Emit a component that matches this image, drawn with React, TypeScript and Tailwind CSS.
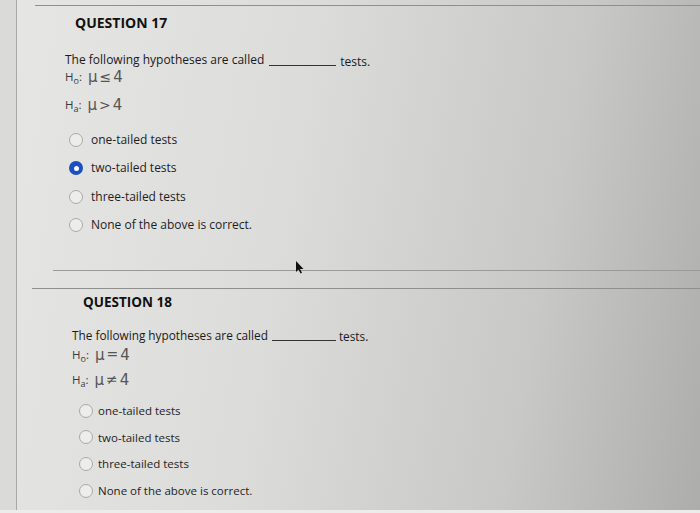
import React from "react";

type Option = { label: string; checked?: boolean };

function Radio({ checked }: { checked?: boolean }) {
  if (checked) {
    return (
      <span className="flex h-[14px] w-[14px] shrink-0 items-center justify-center rounded-full bg-[#1b4fc2]">
        <span className="h-[5px] w-[5px] rounded-full bg-white" />
      </span>
    );
  }
  return (
    <span className="h-[14px] w-[14px] shrink-0 rounded-full border border-[#a9a9a7] bg-[#ededeb]" />
  );
}

function Hypothesis({ sub, rel }: { sub: string; rel: string }) {
  return (
    <div className="flex h-[20px] items-center">
      <span className="text-[11.5px] text-[#3a3a3a]">
        H<sub className="text-[9px]">{sub}</sub>:
      </span>
      <span className="ml-[6px] font-['DejaVu_Sans',sans-serif] text-[15px] text-[#555]">μ</span>
      <span className="ml-[2px] font-['DejaVu_Sans',sans-serif] text-[14px] text-[#555]">{rel}</span>
      <span className="ml-[2px] font-['DejaVu_Sans',sans-serif] text-[15px] text-[#555]">4</span>
    </div>
  );
}

function Options({ options, gap, size, inner }: { options: Option[]; gap: string; size: string; inner: string }) {
  return (
    <div className={`flex flex-col ${gap}`}>
      {options.map((o) => (
        <div key={o.label} className={`flex h-[20px] items-center text-[#1e1e1e] ${size} ${inner}`}>
          <Radio checked={o.checked} />
          <span>{o.label}</span>
        </div>
      ))}
    </div>
  );
}

const labels = ["one-tailed tests", "two-tailed tests", "three-tailed tests", "None of the above is correct."];

export default function App() {
  return (
    <div className="relative flex h-[513px] w-[700px] overflow-hidden border-b-[3px] border-[#ececea] bg-[linear-gradient(100deg,#e6e6e4_0%,#dcdcda_40%,#c8c8c6_75%,#adadab_100%)] font-['Open_Sans',sans-serif] text-[#1a1a1a]">
      {/* left rail */}
      <div className="w-[17px] shrink-0 border-r border-[#a8a8a6] bg-[#dadad8]" />

      <div className="flex flex-1 flex-col">
        {/* Question 17 */}
        <section className="ml-[18px] mt-[5px] border-t border-[#8f8f8d]">
          <h2 className="mt-[7px] h-[20px] pl-[40px] text-[14px] font-bold leading-[20px] text-[#111]">
            QUESTION 17
          </h2>
          <div className="mt-[17px] pl-[30px]">
            <div className="flex h-[20px] items-center text-[12px]">
              <span>The following hypotheses are called</span>
              <span className="ml-[5px] mt-[10px] w-[67px] border-b border-[#333]" />
              <span className="ml-[4px] mt-[4px]">tests.</span>
            </div>
            <div className="-mt-[3px]">
              <Hypothesis sub="o" rel="≤" />
            </div>
            <div className="mt-[8px]">
              <Hypothesis sub="a" rel=">" />
            </div>
            <div className="mt-[15px] pl-[4px]">
              <Options
                gap="gap-[8.3px]"
                size="text-[12px]"
                inner="gap-[8px]"
                options={labels.map((l, i) => ({ label: l, checked: i === 1 }))}
              />
            </div>
          </div>
          <div className="ml-[18px] mt-[35px] border-t border-[#9a9a98]" />
        </section>

        {/* Question 18 */}
        <section className="ml-[15px] mt-[17px] border-t border-[#8f8f8d]">
          <h2 className="mt-[3px] h-[20px] pl-[51px] text-[13.5px] font-bold leading-[20px] text-[#111]">
            QUESTION 18
          </h2>
          <div className="mt-[14px] pl-[40px]">
            <div className="flex h-[20px] items-center text-[11.8px]">
              <span>The following hypotheses are called</span>
              <span className="ml-[4px] mt-[10px] w-[64px] border-b border-[#333]" />
              <span className="ml-[3px] mt-[2px]">tests.</span>
            </div>
            <div className="-mt-[1px]">
              <Hypothesis sub="o" rel="=" />
            </div>
            <div className="mt-[5px]">
              <Hypothesis sub="a" rel="≠" />
            </div>
            <div className="mt-[11px] pl-[7px]">
              <Options
                gap="gap-[6.6px]"
                size="text-[11.5px]"
                inner="gap-[5px]"
                options={labels.map((l) => ({ label: l }))}
              />
            </div>
          </div>
        </section>
      </div>

      {/* mouse pointer */}
      <svg className="absolute left-[295px] top-[261px]" width="9" height="13" viewBox="0 0 9 13">
        <path d="M1 0 L1 11 L3.5 8.5 L5.5 12.5 L7 11.8 L5 8 L8.5 8 Z" fill="#111" />
      </svg>
    </div>
  );
}
